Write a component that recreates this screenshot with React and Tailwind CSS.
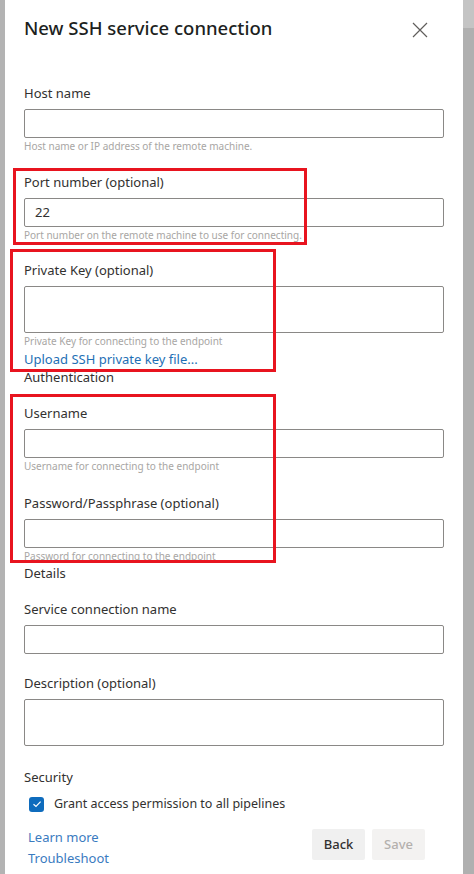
import React from 'react'

const font = { fontFamily: '"Noto Sans", "Open Sans", sans-serif' }

function Field({ label, help, tall, value, gap = 'mt-[18px]' }) {
  return (
    <div className={gap}>
      <div className="text-[13px] leading-[18px] text-[#323130]">{label}</div>
      <div className={`mt-[7px] w-[420px] border border-[#8a8886] rounded-[2px] bg-white ${tall ? 'h-[47px]' : 'h-[29px]'} flex items-center px-[10px] text-[13px] text-[#323130]`}>
        {value}
      </div>
      {help && <div className="mt-[1px] text-[10px] leading-[14px] text-[#a8a6a4]">{help}</div>}
    </div>
  )
}

export default function App() {
  return (
    <div className="relative flex w-[474px] h-[874px] overflow-hidden bg-white" style={font}>
      <div className="w-[5px] h-full bg-[#b3b3b3]" />
      <div className="w-[458px] h-full bg-white px-[19px]">
        <div className="flex items-center justify-between pt-[14px]">
          <div className="text-[18.5px] leading-[28px] font-medium text-[#201f1e]">New SSH service connection</div>
          <svg width="16" height="16" viewBox="0 0 16 16" className="mr-[16px] mt-[4px]">
            <path d="M1 1 L15 15 M15 1 L1 15" stroke="#605e5c" strokeWidth="1.2" fill="none" />
          </svg>
        </div>

        <Field gap="mt-[42px]" label="Host name" help="Host name or IP address of the remote machine." />
        <Field gap="mt-[20px]" label="Port number (optional)" value="22" help="Port number on the remote machine to use for connecting." />
        <Field gap="mt-[19px]" label="Private Key (optional)" tall help="Private Key for connecting to the endpoint" />
        <div className="mt-[2px] text-[13px] leading-[18px] text-[#1e6fb5]">Upload SSH private key file...</div>
        <div className="text-[13px] leading-[18px] text-[#323130]">Authentication</div>

        <Field label="Username" help="Username for connecting to the endpoint" />
        <Field gap="mt-[21px]" label="Password/Passphrase (optional)" help="Password for connecting to the endpoint" />
        <div className="mt-[1px] text-[13px] leading-[18px] text-[#323130]">Details</div>

        <Field label="Service connection name" />
        <Field gap="mt-[20px]" label="Description (optional)" tall />

        <div className="mt-[22px] text-[13px] leading-[18px] text-[#323130]">Security</div>
        <div className="mt-[9px] flex items-center ml-[5px]">
          <div className="w-[15px] h-[15px] rounded-[3px] bg-[#0f6cbd] flex items-center justify-center">
            <svg width="10" height="10" viewBox="0 0 10 10">
              <path d="M1.5 5.2 L4 7.5 L8.6 2.6" stroke="white" strokeWidth="1.2" fill="none" />
            </svg>
          </div>
          <div className="ml-[10px] text-[12.5px] leading-[18px] text-[#323130]">Grant access permission to all pipelines</div>
        </div>

        <div className="mt-[14px] flex items-start justify-between">
          <div className="ml-[4px] text-[13px] leading-[21px] text-[#3a7bbf]">
            <div>Learn more</div>
            <div>Troubleshoot</div>
          </div>
          <div className="flex gap-[7px] mr-[19px] mt-[2px]">
            <div className="w-[53px] h-[31px] bg-[#f0f0f0] rounded-[2px] flex items-center justify-center text-[13px] font-medium text-[#323130]">Back</div>
            <div className="w-[53px] h-[31px] bg-[#f3f2f1] rounded-[2px] flex items-center justify-center text-[13px] font-medium text-[#b3b0ad]">Save</div>
          </div>
        </div>
      </div>
      <div className="w-[11px] h-full flex flex-col">
        <div className="h-[28px] bg-[#c4c4c4]" />
        <div className="flex-1 bg-[#b0b0b0]" />
      </div>

      <div className="absolute left-[13px] top-[168px] w-[294px] h-[77px] border-[3px] border-[#e8141f]" />
      <div className="absolute left-[10px] top-[249px] w-[266px] h-[123px] border-[3px] border-[#e8141f]" />
      <div className="absolute left-[10px] top-[394px] w-[266px] h-[169px] border-[3px] border-[#e8141f]" />
    </div>
  )
}
